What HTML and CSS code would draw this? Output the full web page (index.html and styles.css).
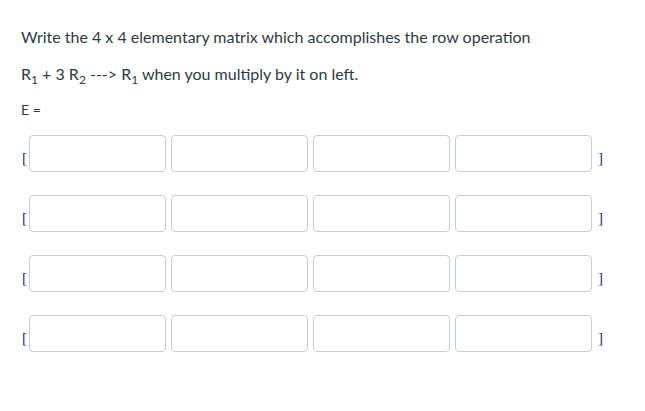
FILE: index.html
```html
<!DOCTYPE html>
<html>
<head>
<meta charset="utf-8">
<link rel="stylesheet" href="styles.css">
</head>
<body>
<div class="question">
  <p class="line line1">Write the 4 x 4 elementary matrix which accomplishes the row operation</p>
  <p class="line line2">R<sub>1</sub> + 3 R<sub>2</sub> ---&gt; R<sub>1</sub> when you multiply by it on left.</p>
  <p class="eq">E =</p>
  <div class="matrix">
    <div class="mrow"><span class="br">[</span><input class="cell"><input class="cell"><input class="cell"><input class="cell"><span class="br br-r">]</span></div>
    <div class="mrow"><span class="br">[</span><input class="cell"><input class="cell"><input class="cell"><input class="cell"><span class="br br-r">]</span></div>
    <div class="mrow"><span class="br">[</span><input class="cell"><input class="cell"><input class="cell"><input class="cell"><span class="br br-r">]</span></div>
    <div class="mrow"><span class="br">[</span><input class="cell"><input class="cell"><input class="cell"><input class="cell"><span class="br br-r">]</span></div>
  </div>
</div>
</body>
</html>
```

FILE: styles.css
```css
html, body {
  margin: 0;
  padding: 0;
  background: #fff;
}
.question {
  padding: 26px 0 0 21px;
  font-family: Lato, "Liberation Sans", sans-serif;
  color: #2d3b45;
}
.line {
  margin: 0;
  font-size: 16px;
  line-height: 22px;
}
.line2 {
  margin-top: 15px;
}
.line sub {
  font-size: 12px;
  vertical-align: -4px;
  line-height: 0;
}
.eq {
  margin: 16px 0 0 0;
  font-size: 14px;
  line-height: 18px;
}
.matrix {
  margin-top: 16px;
  display: flex;
  flex-direction: column;
  gap: 23px;
}
.mrow {
  display: flex;
  align-items: center;
  gap: 5px;
}
.br {
  font-family: "Liberation Serif", serif;
  font-size: 15px;
  color: #1d2a7a;
  margin-top: 10px;
  width: 2px;
  margin-left: 1px;
}
.br-r {
  margin-left: 1px;
}
.cell {
  box-sizing: border-box;
  width: 137px;
  height: 37px;
  margin: 0;
  border: 1px solid #c7cdd1;
  border-radius: 4px;
  background: #fff;
  padding: 0 6px;
  font-family: Lato, sans-serif;
  font-size: 14px;
}
```
